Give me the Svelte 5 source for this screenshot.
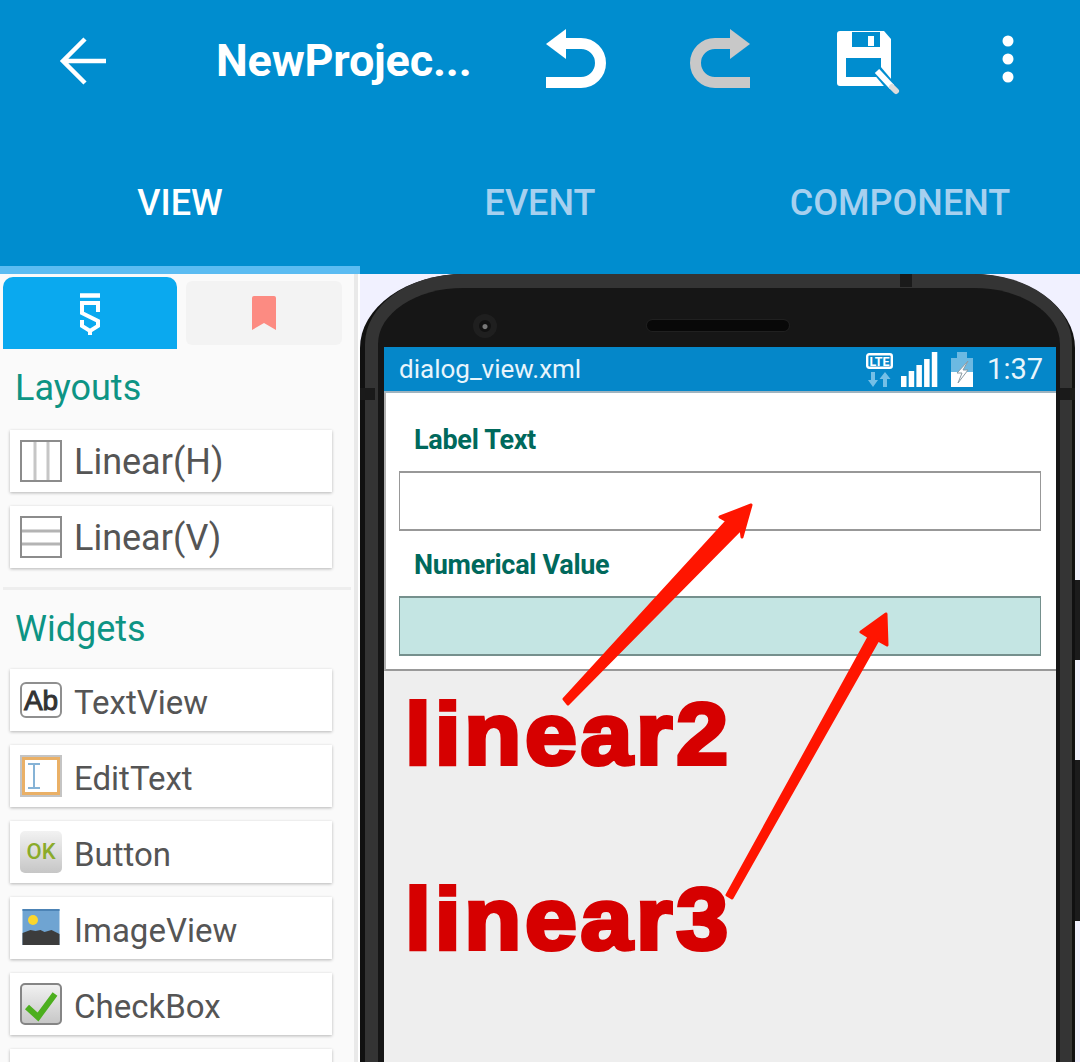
<script>
  const layouts = [
    { name: 'Linear(H)', icon: 'lh' },
    { name: 'Linear(V)', icon: 'lv' }
  ];
  const widgets = [
    { name: 'TextView', icon: 'text' },
    { name: 'EditText', icon: 'edit' },
    { name: 'Button', icon: 'button' },
    { name: 'ImageView', icon: 'image' },
    { name: 'CheckBox', icon: 'check' },
    { name: '', icon: '' }
  ];
  const tabs = ['VIEW', 'EVENT', 'COMPONENT'];
</script>

{#snippet paletteItem(item)}
  <div class="item">
    <svg class="item-icon" width="42" height="42" viewBox="0 0 42 42" aria-hidden="true">
      {#if item.icon === 'lh'}
        <path d="M15 2v38M28 2v38" stroke="#c6c6c6" stroke-width="3" fill="none" />
        <rect x="1" y="1" width="40" height="40" fill="none" stroke="#8c8c8c" stroke-width="2" />
      {:else if item.icon === 'lv'}
        <path d="M2 15h38M2 28h38" stroke="#b4b4b4" stroke-width="3" fill="none" />
        <rect x="1" y="1" width="40" height="40" fill="none" stroke="#8c8c8c" stroke-width="2" />
      {:else if item.icon === 'text'}
        <rect x="1" y="4" width="40" height="34" rx="5" fill="#fff" stroke="#8f8f8f" stroke-width="2" />
        <text x="21" y="31" class="ab">Ab</text>
      {:else if item.icon === 'edit'}
        <rect width="42" height="42" fill="#c4c4c4" />
        <rect x="3.500" y="3.500" width="35" height="35" fill="#fff" stroke="#eab066" stroke-width="3" />
        <path d="M8 9h12M8 33h12M14 9v24" fill="none" stroke="#86b3d6" stroke-width="2" />
      {:else if item.icon === 'button'}
        <rect width="42" height="42" rx="5" fill="url(#btn-grad)" />
        <text x="21" y="28" class="ok">OK</text>
      {:else if item.icon === 'image'}
        <rect x="2.500" y="2" width="37" height="36" fill="#6fa4d2" />
        <rect x="2.500" y="2" width="37" height="2" fill="#4c83b5" />
        <circle cx="13" cy="13" r="5" fill="#fbd62d" />
        <path d="M2.500 26l8-3 5 1 5-1 4 2 7-2 8 4v11h-37z" fill="#3c3c3c" />
      {:else if item.icon === 'check'}
        <rect x="1" y="1" width="40" height="40" rx="4" fill="url(#btn-grad)" stroke="#858585" stroke-width="2" />
        <path d="M7 24l11 10L35 11" fill="none" stroke="#4caf1e" stroke-width="6" />
      {/if}
    </svg>
    <span>{item.name}</span>
  </div>
{/snippet}

<div class="app">
  <svg class="defs" width="0" height="0" aria-hidden="true">
    <defs>
      <linearGradient id="btn-grad" x1="0" y1="0" x2="0" y2="1">
        <stop offset="0" stop-color="#f2f2f2" />
        <stop offset="1" stop-color="#c6c6c6" />
      </linearGradient>
    </defs>
  </svg>

  <header class="toolbar">
    <div class="actions">
      <svg class="back" width="60" height="60" viewBox="0 0 60 60" aria-hidden="true">
        <path d="M51 30H9M30 8L8 30l22 22" fill="none" stroke="#fff" stroke-width="4.500" />
      </svg>
      <div class="title">NewProjec...</div>
      <svg class="undo" width="64" height="64" viewBox="0 0 64 64" aria-hidden="true">
        <path d="M22 2v30L2 17z" fill="#fff" />
        <path d="M20 16.500h17a19.500 19.500 0 0 1 0 39H2" fill="none" stroke="#fff" stroke-width="11" />
      </svg>
      <svg class="redo" width="64" height="64" viewBox="0 0 64 64" aria-hidden="true">
        <path d="M42 2v30L62 17z" fill="#c8c8c8" />
        <path d="M44 16.500H27a19.500 19.500 0 0 0 0 39h35" fill="none" stroke="#c8c8c8" stroke-width="11" />
      </svg>
      <svg class="save" width="66" height="66" viewBox="0 0 66 66" aria-hidden="true">
        <path d="M4 2h44l7 8v44a3 3 0 0 1-3 3H4a3 3 0 0 1-3-3V5a3 3 0 0 1 3-3z" fill="#fff" />
        <rect x="16" y="3" width="28" height="15" fill="#008dcf" />
        <rect x="32" y="7" width="6" height="10" fill="#fff" />
        <rect x="10" y="29" width="35" height="19" fill="#008dcf" />
        <path d="M40 40l17 20" stroke="#008dcf" stroke-width="10" />
        <path d="M41 42l15 16" stroke="#fff" stroke-width="6" />
        <path d="M56 58l4 4" stroke="#dcdcdc" stroke-width="6" stroke-linecap="round" />
      </svg>
      <svg class="more" width="12" height="50" viewBox="0 0 12 50" aria-hidden="true">
        <circle cx="6" cy="7" r="5.500" fill="#fff" />
        <circle cx="6" cy="25" r="5.500" fill="#fff" />
        <circle cx="6" cy="43" r="5.500" fill="#fff" />
      </svg>
    </div>
    <nav class="tabs">
      {#each tabs as tab, i}
        <div class="tab" class:active={i === 0}>{tab}</div>
      {/each}
    </nav>
  </header>

  <main class="body">
    <aside class="sidebar">
      <div class="palette-tabs">
        <div class="ptab on">
          <svg width="24" height="44" viewBox="0 0 24 44" aria-hidden="true">
            <path d="M2 4.500h20" stroke="#fff" stroke-width="4.500" fill="none" />
            <path d="M20 21V12H4V22l16 8v5l-8 5-8-5v-6M12 40v4" stroke="#fff" stroke-width="4" fill="none" />
          </svg>
        </div>
        <div class="ptab off">
          <svg width="24" height="34" viewBox="0 0 24 34" aria-hidden="true">
            <path d="M2 0h20a2 2 0 0 1 2 2v32l-12-7L0 34V2a2 2 0 0 1 2-2z" fill="#fc8b82" />
          </svg>
        </div>
      </div>

      <h2 class="group layouts">Layouts</h2>
      <div class="items">
        {#each layouts as item}
          {@render paletteItem(item)}
        {/each}
      </div>
      <div class="rule"></div>
      <h2 class="group">Widgets</h2>
      <div class="items widgets">
        {#each widgets as item}
          {@render paletteItem(item)}
        {/each}
      </div>
    </aside>

    <section class="canvas">
      <div class="phone">
        <div class="notch top"></div>
        <div class="notch left"></div>
        <div class="notch right"></div>
        <div class="ring">
          <div class="head">
            <div class="camera"></div>
            <div class="speaker"></div>
          </div>
          <div class="screen">
            <div class="statusbar">
              <span class="file">dialog_view.xml</span>
              <svg class="status-icons" width="110" height="38" viewBox="0 0 110 38" aria-hidden="true">
                <rect x="1.200" y="4.200" width="24.600" height="13.600" rx="2" fill="none" stroke="#fff" stroke-width="2.400" />
                <text x="13.500" y="15.500" class="lte">LTE</text>
                <path d="M5 22h4v8h3l-5 7-5-7h3z" fill="#74bfe6" />
                <path d="M19 22l5.500 7H21v8h-4v-8h-3.500z" fill="#74bfe6" />
                <rect x="35" y="26" width="5.500" height="11" fill="#fff" />
                <rect x="42.700" y="21" width="5.500" height="16" fill="#fff" />
                <rect x="50.400" y="15" width="5.500" height="22" fill="#fff" />
                <rect x="58.100" y="9" width="5.500" height="28" fill="#fff" />
                <rect x="65.800" y="2" width="5.500" height="35" fill="#fff" />
                <path d="M91 2h10v6h6v29H85V8h6z" fill="#6cb9e2" />
                <rect x="85" y="22" width="22" height="15" fill="#fff" />
                <path d="M102 11l-11 12h5l-4 10 10-13h-5z" fill="#fff" stroke="#8a9aa3" stroke-width="1" />
              </svg>
              <span class="clock">1:37</span>
            </div>
            <div class="form">
              <div class="label">Label Text</div>
              <div class="field"></div>
              <div class="label second">Numerical Value</div>
              <div class="field tinted"></div>
            </div>
          </div>
        </div>
      </div>
      <div class="edge-btn vol"></div>
      <div class="edge-btn pow"></div>
    </section>
  </main>

  <!-- annotations drawn on top of the screenshot -->
  <svg class="arrows" width="1080" height="1062" viewBox="0 0 1080 1062" aria-hidden="true">
    <path d="M564 699l4 5L741 529l1 8 9-32-31 12 7 4z" fill="#ff1500" stroke="#ff1500" stroke-width="3" stroke-linejoin="round" />
    <path d="M727 895l5 3 146-258 9 5-1-31-25 18 8 5z" fill="#ff1500" stroke="#ff1500" stroke-width="3" stroke-linejoin="round" />
  </svg>
  <div class="note one">linear2</div>
  <div class="note two">linear3</div>
</div>

<style>
  :global(body) {
    margin: 0;
    background: #fff;
  }

  .app {
    position: relative;
    width: 1080px;
    height: 1062px;
    overflow: hidden;
    display: flex;
    flex-direction: column;
    font-family: Roboto, "Noto Sans", sans-serif;
  }

  .defs {
    position: absolute;
  }

  .toolbar {
    height: 274px;
    flex: none;
    background: #008dcf;
    display: flex;
    flex-direction: column;
  }

  .actions {
    height: 121px;
    display: flex;
    align-items: center;
    color: #fff;
  }

  .back {
    margin-left: 55px;
  }

  .title {
    width: 329px;
    margin-left: 101px;
    font-size: 45px;
    font-weight: 700;
    letter-spacing: -0.2px;
    white-space: nowrap;
  }

  .undo {
    margin-top: -4px;
    margin-left: -1px;
  }

  .redo {
    margin-top: -4px;
    margin-left: 80px;
  }

  .save {
    margin-top: 2px;
    margin-left: 84px;
  }

  .more {
    margin-left: 100px;
    margin-top: -4px;
  }

  .tabs {
    display: flex;
    height: 153px;
  }

  .tab {
    width: 360px;
    height: 145px;
    padding-top: 50px;
    box-sizing: border-box;
    text-align: center;
    font-size: 36px;
    font-weight: 500;
    line-height: 64px;
    color: #a6d0ef;
  }

  .tab.active {
    height: 153px;
    color: #fff;
    border-bottom: 8px solid #5bbcf2;
  }

  .body {
    flex: 1;
    display: flex;
    min-height: 0;
  }

  .sidebar {
    width: 354px;
    flex: none;
    background: #fafafa;
    border-right: 4px solid #e9e9e9;
    margin-right: 2px;
  }

  .palette-tabs {
    display: flex;
    align-items: center;
    gap: 9px;
    padding: 3px 0 0 3px;
    height: 72px;
  }

  .ptab {
    display: flex;
    align-items: center;
    justify-content: center;
  }

  .ptab.on {
    width: 174px;
    height: 72px;
    background: #0aa9ef;
    border-radius: 10px 10px 0 0;
  }

  .ptab.off {
    width: 156px;
    height: 64px;
    background: #f3f3f3;
    border-radius: 6px;
  }

  .group {
    margin: 0;
    padding-left: 15px;
    height: 44px;
    font-size: 36px;
    font-weight: 400;
    line-height: 44px;
    color: #0d9484;
  }

  .layouts {
    margin-top: 17px;
  }

  .items {
    display: flex;
    flex-direction: column;
    gap: 14px;
    padding: 0 22px 0 10px;
    margin-top: 20px;
  }

  .items.widgets {
    margin-top: 18px;
  }

  .rule {
    height: 3px;
    margin: 19px 3px 17px;
    background: #eeeeee;
  }

  .item {
    height: 62px;
    flex: none;
    background: #fff;
    box-shadow: 0 1px 3px rgba(0, 0, 0, 0.28);
    display: flex;
    align-items: center;
    padding-left: 10px;
    gap: 12px;
    font-size: 36px;
    color: #555;
  }

  .item span {
    padding-top: 2px;
  }

  .widgets .item {
    font-size: 33px;
  }

  .widgets .item span {
    padding-top: 4px;
  }

  .item-icon {
    flex: none;
  }

  .ab {
    font: 400 28px "Liberation Sans", sans-serif;
    fill: #333;
    stroke: #333;
    stroke-width: 1px;
    text-anchor: middle;
  }

  .ok {
    font: 500 22px Roboto, sans-serif;
    fill: #8aab2a;
    text-anchor: middle;
  }

  .lte {
    font: 700 12.500px Roboto, sans-serif;
    fill: #fff;
    text-anchor: middle;
  }

  .canvas {
    position: relative;
    flex: 1;
    background: #f1f1ff;
    display: flex;
  }

  .phone {
    position: relative;
    width: 715px;
    flex: none;
    height: 860px;
    box-sizing: border-box;
    background: #111;
    border-radius: 104px 104px 0 0 / 74px 74px 0 0;
    padding: 0 3px 0 5px;
  }

  .notch {
    position: absolute;
    background: #1a1a1a;
  }

  .notch.top {
    left: 540px;
    top: 0;
    width: 12px;
    height: 13px;
  }

  .notch.left {
    left: 0;
    top: 114px;
    width: 15px;
    height: 12px;
  }

  .notch.right {
    right: 0;
    top: 114px;
    width: 15px;
    height: 12px;
  }

  .ring {
    height: 100%;
    box-sizing: border-box;
    background: #161616;
    border: solid #343434;
    border-width: 14px 12px 0 13px;
    border-radius: 98px 98px 0 0 / 70px 70px 0 0;
    padding: 0 4px 0 6px;
    display: flex;
    flex-direction: column;
  }

  .head {
    height: 59px;
    flex: none;
    box-sizing: border-box;
    display: flex;
    align-items: center;
    padding: 16px 0 0 89px;
  }

  .camera {
    width: 12px;
    height: 12px;
    border-radius: 50%;
    border: 6px solid #1f1f1f;
    background: radial-gradient(circle at 50% 55%, #777 0 2px, #111 3px);
  }

  .speaker {
    width: 142px;
    height: 11px;
    margin-left: 150px;
    background: #080808;
    border-radius: 6px;
    box-shadow: 0 0 0 1px #202020;
  }

  .screen {
    flex: 1;
    background: #eeeeee;
    display: flex;
    flex-direction: column;
  }

  .statusbar {
    height: 44px;
    flex: none;
    background: #0587c9;
    display: flex;
    align-items: center;
    padding: 0 13px 0 15px;
    color: #e8f5fc;
    border-bottom: 2px solid #9fb4c0;
  }

  .file {
    font-size: 26px;
    flex: 1;
  }

  .status-icons {
    margin-right: 11px;
  }

  .clock {
    font-size: 29px;
  }

  .form {
    flex: none;
    background: #fff;
    padding: 32px 15px 13px 13px;
    border-left: 2px solid #b0b0b0;
    border-bottom: 2px solid #999;
  }

  .label {
    padding-left: 15px;
    height: 30px;
    line-height: 30px;
    font-size: 27px;
    font-weight: 700;
    color: #00695c;
    letter-spacing: -0.3px;
  }

  .label.second {
    margin-top: 19px;
  }

  .field {
    height: 60px;
    margin-top: 16px;
    box-sizing: border-box;
    background: #fff;
    border: solid #989898;
    border-width: 2px 1px;
  }

  .field.tinted {
    background: #c4e5e3;
    border-color: #75908d;
  }

  .edge-btn {
    position: absolute;
    right: 0;
    width: 5px;
    background: #1c1c1c;
  }

  .vol {
    top: 306px;
    height: 80px;
  }

  .pow {
    top: 486px;
    height: 161px;
  }

  .arrows {
    position: absolute;
    left: 0;
    top: 0;
    pointer-events: none;
  }

  .note {
    position: absolute;
    left: 405px;
    font-family: "Liberation Sans", Arial, sans-serif;
    font-size: 88px;
    line-height: 100px;
    font-weight: 700;
    letter-spacing: 3.500px;
    color: #d60000;
    -webkit-text-stroke: 4px #d60000;
    transform: scaleX(1.06);
    transform-origin: left center;
  }

  .note.one {
    top: 684px;
  }

  .note.two {
    top: 869px;
  }
</style>
